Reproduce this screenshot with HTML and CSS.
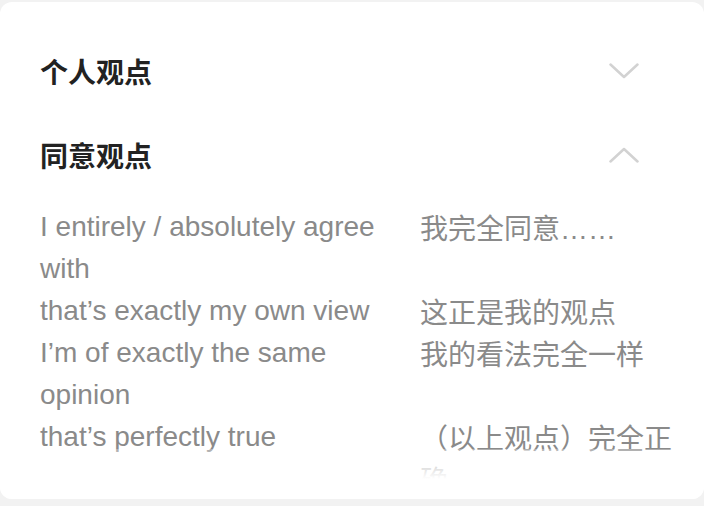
FILE: index.html
```html
<!DOCTYPE html>
<html lang="zh">
<head>
  <meta charset="UTF-8">
  <meta name="viewport" content="width=device-width, initial-scale=1.0">
  <title>观点表达</title>
  <link rel="stylesheet" href="styles.css">
</head>
<body>

  <div class="card">
    <!-- 个人观点（收起） -->
    <div class="section-header">
      <h2>个人观点</h2>
      <svg class="chevron" width="30" height="16" viewBox="0 0 30 16">
        <polyline points="1.5,1.5 15,14 28.5,1.5" />
      </svg>
    </div>

    <!-- 同意观点（展开） -->
    <div class="section-header">
      <h2>同意观点</h2>
      <svg class="chevron" width="30" height="16" viewBox="0 0 30 16">
        <polyline points="1.5,14.5 15,2 28.5,14.5" />
      </svg>
    </div>

    <div class="phrases">
      <div class="en">I entirely / absolutely agree with</div>
      <div class="zh">我完全同意<span class="dots">……</span></div>
      <div class="en">that’s exactly my own view</div>
      <div class="zh">这正是我的观点</div>
      <div class="en">I’m of exactly the same opinion</div>
      <div class="zh">我的看法完全一样</div>
      <div class="en">that’s perfectly true</div>
      <div class="zh">（以上观点）完全正确</div>
    </div>
  </div>

</body>
</html>
```

FILE: styles.css
```css
* {
  margin: 0;
  padding: 0;
  box-sizing: border-box;
}
body {
  background-color: #f2f2f2;
  font-family: 'Liberation Sans', Arial, 'Noto Sans CJK SC', sans-serif;
  overflow: hidden;
}
.card {
  margin-top: 2px;
  height: 497px;
  background-color: #fff;
  border-radius: 12px;
  padding: 27px 66px 0 40px;
  overflow: hidden;
  position: relative;
}
/* fade out the bottom of the list */
.card::after {
  content: '';
  position: absolute;
  left: 0;
  right: 0;
  bottom: 0;
  height: 50px;
  background: linear-gradient(rgba(255, 255, 255, 0.3), #fff 60%);
}
.section-header {
  height: 84px;
  display: flex;
  justify-content: space-between;
  align-items: center;
}
.section-header h2 {
  font-size: 28px;
  font-weight: bold;
  color: #222;
  font-family: 'Noto Sans CJK SC', sans-serif;
}
.chevron {
  fill: none;
  stroke: #d2d2d2;
  stroke-width: 2.5;
  stroke-linecap: round;
  stroke-linejoin: round;
  margin-right: -1px;
}
.phrases {
  margin-top: 9px;
  display: grid;
  grid-template-columns: 350px 260px;
  column-gap: 30px;
  font-size: 28px;
  line-height: 42px;
  color: #8a8a8a;
}
.zh {
  font-family: 'Noto Sans CJK SC', sans-serif;
}
.zh .dots {
  font-family: 'Liberation Sans', Arial, sans-serif;
}
```
